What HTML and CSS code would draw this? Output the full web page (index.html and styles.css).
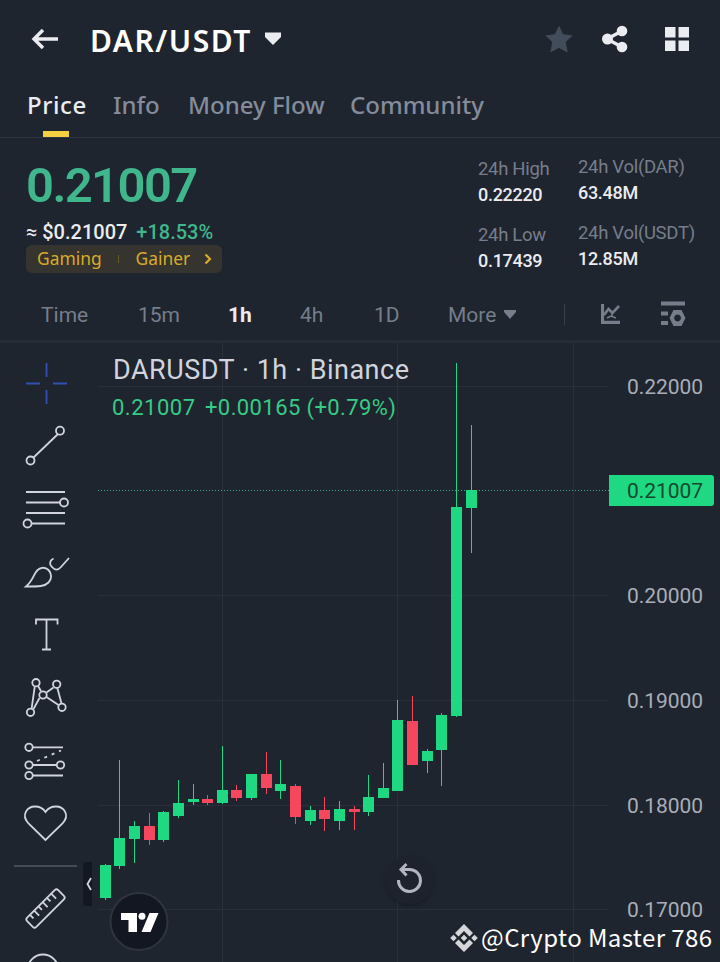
FILE: index.html
```html
<!DOCTYPE html>
<html lang="en">
<head>
    <meta charset="UTF-8">
    <meta name="viewport" content="width=device-width, initial-scale=1.0">
    <title>DAR/USDT</title>
    <link rel="stylesheet" href="styles.css">
</head>
<body>
    <div class="app">
        <header class="header">
            <svg class="back" width="28" height="22" viewBox="0 0 28 22">
                <path d="M27 11H3M12 2L3 11l9 9" fill="none" stroke="#eaecef" stroke-width="3.4"/>
            </svg>
            <h1>DAR/USDT</h1>
            <svg class="caret" width="18" height="14" viewBox="0 0 18 14">
                <path d="M1 .5h16v4.500L9 13 1 5z" fill="#eaecef"/>
            </svg>
            <div class="actions">
                <svg width="28" height="28" viewBox="0 0 28 28">
                    <path d="M14 1.500l3.800 8.200 9 1.100-6.600 6.200 1.900 9.700-8.100-4.300-8.100 4.300 1.900-9.700L1.200 10.800l9-1.100z" fill="#434c5a" stroke="#434c5a" stroke-linejoin="round"/>
                </svg>
                <svg width="28" height="28" viewBox="0 0 28 28">
                    <path d="M21 6L6 14l15 8" fill="none" stroke="#eaecef" stroke-width="3.400"/>
                    <circle cx="21" cy="6" r="5.300" fill="#eaecef"/>
                    <circle cx="6.500" cy="14" r="5.500" fill="#eaecef"/>
                    <circle cx="21" cy="22" r="5.300" fill="#eaecef"/>
                </svg>
                <svg width="24" height="24" viewBox="0 0 24 24">
                    <path d="M0 0h10.500v10.500H0zM13.500 0H24v10.500H13.500zM0 13.500h10.500V24H0zM13.500 13.500H24V24H13.500z" fill="#eaecef"/>
                </svg>
            </div>
        </header>

        <nav class="tabs">
            <a class="tab active">Price</a>
            <a class="tab info">Info</a>
            <a class="tab flow">Money Flow</a>
            <a class="tab community">Community</a>
        </nav>

        <section class="ticker">
            <div class="quote">
                <div class="price">0.21007</div>
                <div class="fiat">≈ <b>$0.21007</b> <span class="up">+18.53%</span></div>
                <div class="tags">
                    <span>Gaming</span>
                    <i class="tag-divider"></i>
                    <span>Gainer</span>
                    <svg width="8" height="12" viewBox="0 0 8 12">
                        <path d="M1.500 1.500L6 6l-4.500 4.500" fill="none" stroke="#d9ab2b" stroke-width="2.200"/>
                    </svg>
                </div>
            </div>
            <dl class="stats">
                <dt>24h High</dt>
                <dd>0.22220</dd>
                <dt>24h Low</dt>
                <dd>0.17439</dd>
            </dl>
            <dl class="stats volume">
                <dt>24h Vol(DAR)</dt>
                <dd>63.48M</dd>
                <dt>24h Vol(USDT)</dt>
                <dd>12.85M</dd>
            </dl>
        </section>

        <div class="intervals">
            <span class="time">Time</span>
            <span class="m15">15m</span>
            <span class="h1 selected">1h</span>
            <span class="h4">4h</span>
            <span class="d1">1D</span>
            <span class="more">More</span>
            <svg class="more-caret" width="12" height="9" viewBox="0 0 12 9">
                <path d="M0 0h12v2L6 9 0 2z" fill="#767d8b"/>
            </svg>
            <i class="bar"></i>
            <svg class="indicator" width="20" height="21" viewBox="0 0 20 21">
                <path d="M1.500 0v18.300H19" fill="none" stroke="#767d8b" stroke-width="3.200"/>
                <path d="M3 11l4.500-6 4 4L18 2" fill="none" stroke="#767d8b" stroke-width="2.600"/>
                <path d="M11 9v4M6 14l4-2 5 2" fill="none" stroke="#767d8b" stroke-width="1.500"/>
            </svg>
            <svg class="settings" width="26" height="26" viewBox="0 0 26 26">
                <path d="M1 2.500h24M1 12.500h7M1 22h7" fill="none" stroke="#767d8b" stroke-width="4"/>
                <path d="M13.500 9h8l4 8-4 8h-8l-4-8zM17.500 13.600a3.400 3.400 0 1 0 .1 0z" fill="#767d8b" fill-rule="evenodd"/>
            </svg>
        </div>

        <main class="chart">
            <svg class="tools" width="98" height="619" viewBox="0 343 98 619">
                <path class="cross" d="M46.500 363v14M46.500 390v14M26 383.500h14M53 383.500h14"/>

                <path d="M33 458l25-24"/>
                <circle cx="30.500" cy="460.500" r="4"/>
                <circle cx="60" cy="430.700" r="4"/>

                <path d="M26 492h39M26 502.500h34M26 513h39M31 523.500h34"/>
                <circle cx="64" cy="502.500" r="4"/>
                <circle cx="27.500" cy="523.500" r="4"/>

                <!-- brush -->
                <path d="M26 586.500c6-5 7.500-11 10-14.500 3-5 9-5.500 12.500-2s3.500 9 0 12.500c-4 4-9 4-22.500 4z"/>
                <path d="M53.500 558.500c-4 2-4.500 6-1.500 8.500 3 3.500 6 3.500 9 0l8-9"/>

                <path d="M36 624.500v-5h21.500v5M46.500 619.500v30M42 649.500h9"/>

                <path d="M34.700 687l-3 21M38 686l3 5M39.500 698l-6 11M46.500 692.500l7-5M57.500 688.500l4 15M46.500 697l12 8"/>
                <circle cx="36" cy="682.700" r="3.700"/>
                <circle cx="56.700" cy="684.300" r="3.700"/>
                <circle cx="43" cy="695" r="3.700"/>
                <circle cx="62" cy="707.300" r="3.700"/>
                <circle cx="30.500" cy="712.300" r="3.700"/>

                <path d="M33 747.300h30M33 765h23M33 775.500h30"/>
                <path class="dots" d="M37 761l24-10.500"/>
                <circle cx="29" cy="747.300" r="3.700"/>
                <circle cx="29" cy="765" r="3.700"/>
                <circle cx="60.500" cy="765" r="3.700"/>
                <circle cx="29" cy="775.500" r="3.700"/>

                <path d="M45.500 840L28.500 823.500c-8-9-1-17 6.500-17 5 0 8.500 2.500 10.500 5.500 2-3 5.500-5.500 10.500-5.500 7.500 0 14.500 8 6.500 17z"/>
                <path class="rule" d="M14 866h63"/>

                <!-- ruler -->
                <g transform="rotate(-45 45.500 908.500)">
                    <rect x="23.500" y="902" width="44" height="13" rx="2.500"/>
                    <path d="M30 902v5M36 902v7M42 902v5M48 902v7M54 902v5M60 902v7"/>
                </g>
                <circle cx="43" cy="970" r="15.500"/>

                <path class="handle" d="M92 862h-5q-4 0-4 4v36q0 4 4 4h5z"/>
                <path d="M91 878l-3.500 6 3.500 6"/>
            </svg>

            <svg class="plot" width="622" height="619" viewBox="98 343 622 619">
                <path class="grid" d="M222.500 343v619M397.500 343v619M573.500 343v619M98 386.500h510M98 595.500h510M98 700.500h510M98 805.500h510M98 909.500h510"/>
                <path class="last-line" d="M98 490.500h511"/>
                <g id="candles"></g>

                <text class="symbol" x="113" y="379" textLength="296">DARUSDT · 1h · Binance</text>
                <text class="change" x="112" y="415" textLength="83">0.21007</text>
                <text class="change" x="205" y="415" textLength="191">+0.00165 (+0.79%)</text>

                <g class="scale">
                    <text x="627" y="394" textLength="76">0.22000</text>
                    <text x="627" y="603" textLength="76">0.20000</text>
                    <text x="627" y="708" textLength="76">0.19000</text>
                    <text x="627" y="813" textLength="76">0.18000</text>
                    <text x="627" y="917" textLength="76">0.17000</text>
                </g>
                <path d="M609 475h102q3 0 3 3v25q0 3-3 3H609z" fill="#1fd882"/>
                <text class="last" x="627" y="498" textLength="76">0.21007</text>

                <!-- reset button -->
                <circle class="reset" cx="409.500" cy="880" r="24"/>
                <path d="M398.500 880a11 11 0 1 0 11-10.500h-8M406.500 864l-5.500 5.500 5.500 6" fill="none" stroke="#b2b5be" stroke-width="3"/>

                <!-- chart library badge -->
                <circle cx="139" cy="921.500" r="28.500" fill="#131722" stroke="#30343f" stroke-width="2"/>
                <path d="M121 913h16v19h-8.500v-12H121zM149.500 913h9l-8 19h-9z" fill="#fff"/>
                <circle cx="142" cy="916.300" r="3.500" fill="#fff"/>

                <g class="watermark">
                    <path d="M464 924l9 9-3.500 3.500-5.500-5.500-5.500 5.500-3.500-3.500zM464 952l9-9-3.500-3.500-5.500 5.500-5.500-5.500-3.500 3.500zM464 934.800l3.300 3.200-3.300 3.200-3.300-3.200zM453.500 934.800l3.300 3.200-3.300 3.200-3.300-3.200zM474.500 934.800l3.300 3.200-3.300 3.200-3.300-3.200z"/>
                    <text x="481" y="947" textLength="231">@Crypto Master 786</text>
                </g>
            </svg>
        </main>
    </div>

    <script src="chart.js"></script>
</body>
</html>
```
FILE: styles.css
```css
body {
    margin: 0;
    background-color: #1f252f;
    color: #eaecef;
    font-family: Roboto, "Noto Sans", sans-serif;
}

.app {
    width: 720px;
    height: 962px;
    overflow: hidden;
}

svg {
    display: block;
    flex: none;
}

.header {
    display: flex;
    align-items: center;
    height: 77px;
    padding: 0 31px;
}

h1 {
    margin: 3px 0 0 31px;
    width: 162px;
    font: 600 30px "Noto Sans", sans-serif;
    letter-spacing: 1.5px;
    color: #fff;
    white-space: nowrap;
}

.caret {
    margin-left: 12px;
}

.actions {
    display: flex;
    align-items: center;
    margin-left: auto;
}

.actions svg {
    margin-left: 28px;
}

.actions svg:last-child {
    margin-left: 36px;
}

.tabs {
    display: flex;
    height: 60px;
    padding-left: 27px;
    border-bottom: 1px solid #303641;
    font: 500 24px/56px "Noto Sans", sans-serif;
    color: #848b9a;
}

.tab {
    white-space: nowrap;
}

.tab.active {
    position: relative;
    width: 86px;
    color: #eaecef;
    letter-spacing: 0.6px;
}

.tab.active::after {
    content: "";
    position: absolute;
    left: 16px;
    bottom: 0;
    width: 26px;
    height: 6px;
    background-color: #f5d043;
}

.info {
    width: 75px;
}

.flow {
    width: 162px;
}

.ticker {
    display: flex;
    height: 150px;
}

.quote {
    width: 452px;
    padding-left: 26px;
}

.price {
    height: 81px;
    font: 600 49px/95px Roboto, sans-serif;
    letter-spacing: -1.6px;
    color: #3fb68b;
}

.fiat {
    height: 26px;
    line-height: 26px;
    font-size: 20px;
    white-space: nowrap;
}

.fiat b {
    font-weight: 500;
}

.up {
    margin-left: 4px;
    color: #3fb68b;
    font-weight: 500;
}

.tags {
    display: flex;
    align-items: center;
    box-sizing: border-box;
    width: 196px;
    height: 28px;
    padding-left: 11px;
    border-radius: 6px;
    background-color: #36342e;
    color: #d9ab2b;
    font: 17.4px/26px "Noto Sans", sans-serif;
}

.tags span {
    height: 28px;
}

.tag-divider {
    width: 1px;
    height: 8px;
    margin: 0 17px 0 16px;
    background-color: #6a5829;
}

.tags svg {
    margin-left: 14px;
}

.stats {
    width: 100px;
    margin: 18px 0 0;
    white-space: nowrap;
}

.volume {
    margin-top: 16px;
}

.stats dt {
    height: 26px;
    line-height: 26px;
    font-size: 18.5px;
    letter-spacing: -0.3px;
    color: #767d8b;
}

.stats dd {
    height: 26px;
    margin: 0 0 14px;
    line-height: 26px;
    font-size: 18px;
    font-weight: 500;
    letter-spacing: -0.3px;
}

.intervals {
    display: flex;
    align-items: center;
    height: 52px;
    border-bottom: 3px solid #272d38;
    font-size: 21px;
    color: #767d8b;
}

.intervals span {
    padding-top: 2px;
}

.time {
    width: 97px;
    margin-left: 41px;
}

.m15 {
    width: 90px;
}

.h1 {
    width: 72px;
}

.selected {
    color: #eaecef;
    font-weight: 700;
}

.h4 {
    width: 74px;
}

.d1 {
    width: 74px;
}

.more {
    width: 56px;
}

.bar {
    width: 1px;
    height: 21px;
    margin: 0 36px 0 48px;
    background-color: #3a404b;
}

.settings {
    margin-left: 39px;
}

.chart {
    display: flex;
    height: 619px;
}

.tools {
    fill: none;
    stroke: #d1d4dc;
    stroke-width: 1.8;
}

.tools .cross {
    stroke: #3150b4;
}

.tools .dots {
    stroke-dasharray: 3 5;
}

.tools .rule {
    stroke: #454a55;
}

.tools .handle {
    fill: #131722;
    stroke: none;
}

.grid {
    stroke: #2a303a;
}

.last-line {
    stroke: #42a884;
    stroke-dasharray: 1 2;
}

.up-candle {
    fill: #1fd882;
}

.down-candle {
    fill: #f5475d;
}

.symbol {
    font-size: 27px;
    fill: #d1d4dc;
}

.change {
    font-size: 22px;
    fill: #36cb86;
}

.scale,
.last {
    font-size: 21px;
    fill: #a9adb8;
}

.last {
    fill: #14482e;
}

.reset {
    fill: #1e222d;
    filter: drop-shadow(0 2px 2px rgba(0, 0, 0, 0.25));
}

.watermark path {
    fill: #d5d6d8;
}

.watermark text {
    font: 400 24px "Noto Sans CJK SC", sans-serif;
    fill: #fff;
}
```
FILE: chart.js
```js
// x, high, body top, body bottom, low, direction
const CANDLES = [
    [105, 864, 865, 898, 900, 'up'],
    [119, 760, 838, 866, 869, 'up'],
    [134, 821, 826, 839, 863, 'up'],
    [149, 813, 826, 840, 845, 'down'],
    [163, 811, 812, 840, 842, 'up'],
    [178, 780, 803, 816, 818, 'up'],
    [193, 784, 799, 802, 805, 'up'],
    [207, 795, 799, 803, 805, 'down'],
    [222, 746, 790, 803, 804, 'up'],
    [236, 785, 790, 798, 801, 'down'],
    [251, 774, 774, 798, 800, 'up'],
    [266, 752, 774, 788, 794, 'down'],
    [280, 760, 784, 791, 799, 'up'],
    [295, 784, 786, 817, 824, 'down'],
    [310, 806, 810, 821, 825, 'up'],
    [324, 797, 810, 819, 831, 'down'],
    [339, 801, 809, 821, 830, 'up'],
    [354, 806, 809, 812, 830, 'down'],
    [368, 775, 797, 812, 816, 'up'],
    [383, 763, 788, 798, 798, 'up'],
    [397, 700, 720, 791, 791, 'up'],
    [412, 696, 721, 765, 765, 'down'],
    [427, 749, 751, 761, 773, 'up'],
    [441, 713, 715, 750, 786, 'up'],
    [456, 363, 507, 716, 717, 'up'],
    [471, 425, 490, 508, 553, 'up']
];

document.querySelector('#candles').innerHTML = CANDLES.map(([x, high, top, bottom, low, dir]) => `
    <g class="${dir}-candle">
        <rect x="${x}" y="${high}" width="1" height="${low - high}"/>
        <rect x="${x - 5}" y="${top}" width="11" height="${bottom - top}"/>
    </g>
`).join('');
```
